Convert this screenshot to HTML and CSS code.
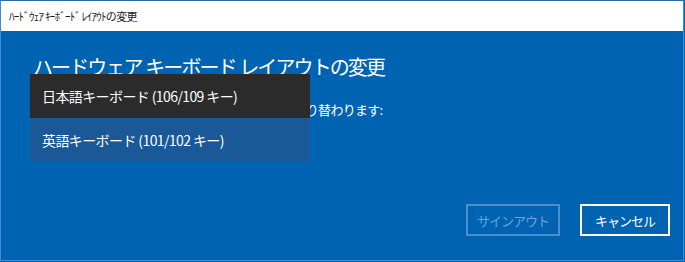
FILE: index.html
```html
<!DOCTYPE html>
<html>
<head>
    <title>ハードウェア キーボード レイアウトの変更</title>
    <link rel="stylesheet" href="styles.css">
</head>
<body>
    <div id="window">
        <div id="titlebar">ﾊｰﾄﾞｳｪｱ ｷｰﾎﾞｰﾄﾞ ﾚｲｱｳﾄの変更</div>
        <div id="content">
            <h1 class="heading">ハードウェア キーボード レイアウトの変更</h1>
            <div class="layout-row">
                <p class="description">再起動後、キーボード レイアウトは次のように切り替わります:</p>
                <div class="dropdown">
                    <div class="dropdown-item selected">日本語キーボード (106/109 キー)</div>
                    <div class="dropdown-item">英語キーボード (101/102 キー)</div>
                </div>
            </div>
            <div class="button-container">
                <button class="action-button" disabled>サインアウト</button>
                <button class="action-button">キャンセル</button>
            </div>
        </div>
    </div>
</body>
</html>
```

FILE: styles.css
```css
html, body {
    margin: 0;
    padding: 0;
    height: 100%;
    background: #0063b1;
}
body {
    font-family: "Noto Sans CJK JP", "Noto Sans", sans-serif;
    color: white;
}
#window {
    box-sizing: border-box;
    width: 684px;
    height: 261px;
    border: 1px solid #3f8ccf;
    border-top-color: #2a6aa8;
    display: flex;
    flex-direction: column;
    background: #0063b1;
}
#titlebar {
    height: 30px;
    background: #ffffff;
    color: #1a1a1a;
    font-size: 11px;
    letter-spacing: -0.7px;
    line-height: 30px;
    padding: 0 8px;
    flex-shrink: 0;
}
#content {
    flex: 1;
    padding: 0 13px 0 31px;
    display: flex;
    flex-direction: column;
}
.heading {
    margin: 19px 0 0 1px;
    font-size: 20px;
    font-weight: normal;
    line-height: 34px;
    letter-spacing: -1.9px;
    word-spacing: 1px;
}
.layout-row {
    position: relative;
    height: 94px;
}
.description {
    margin: 16px 0 0 1px;
    font-size: 13px;
    letter-spacing: -0.7px;
    line-height: 20px;
}
.dropdown {
    position: absolute;
    top: -10px;
    left: -2px;
    width: 280px;
    background: #1a5897;
}
.dropdown-item {
    height: 44px;
    line-height: 44px;
    padding: 0 12px;
    font-size: 14px;
    letter-spacing: -0.6px;
}
.dropdown-item.selected {
    background: #2b2b2b;
}
.button-container {
    display: flex;
    justify-content: flex-end;
    gap: 20px;
    margin-top: 26px;
}
.action-button {
    box-sizing: border-box;
    width: 92px;
    height: 32px;
    background: none;
    border: 2px solid #ffffff;
    color: #ffffff;
    font-family: inherit;
    font-size: 13px;
    letter-spacing: -1px;
    padding: 0;
}
.action-button:disabled {
    width: 94px;
    border-color: #4d8fcc;
    color: #6fa2d6;
}
.action-button:last-child {
    width: 90px;
}
```
